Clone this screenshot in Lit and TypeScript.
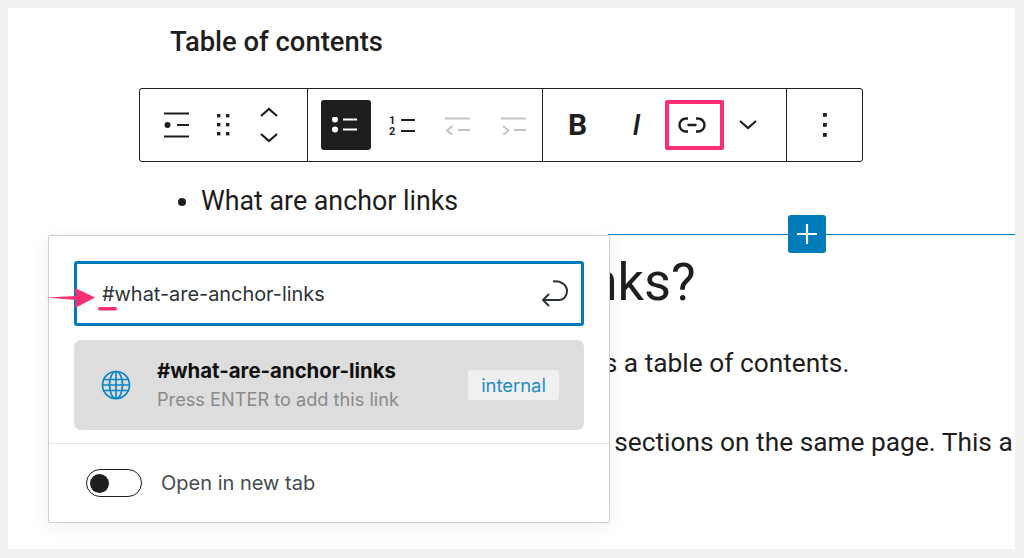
import { LitElement, html, css, svg } from "lit";
import { customElement } from "lit/decorators.js";

const ic = (w: number, h: number, body: unknown) =>
  html`<svg class="ic" width=${w} height=${h} viewBox="0 0 ${w} ${h}" fill="none" stroke="currentColor" stroke-width="2.2">${body}</svg>`;

@customElement("app-root")
export class AppRoot extends LitElement {
  static styles = css`
    :host { display: block; width: 1024px; height: 558px; background: #f1f1f1; font-family: Roboto, "Liberation Sans", sans-serif; color: #1e1e1e; overflow: hidden; }
    .page { position: relative; margin: 0 8px; top: 8px; height: 541px; width: 1007px; background: #fff; overflow: hidden; padding-left: 162px; box-sizing: border-box; }
    .toc { margin: 0; padding-top: 18px; font-size: 27.4px; line-height: 32px; font-weight: 500; }
    .toolbar { display: flex; width: 724px; height: 74px; box-sizing: border-box; margin: 30px 0 0 -31px; border: 1.5px solid #1e1e1e; border-radius: 3px; background: #fff; }
    .group { display: flex; align-items: center; box-sizing: border-box; border-right: 1.5px solid #1e1e1e; }
    .group:last-child { border-right: 0; }
    .g1 { width: 168px; padding-left: 24px; gap: 27px; }
    .g1 .ch { margin-left: 2px; }
    .g2 { width: 235px; padding-left: 13px; }
    .g3 { width: 244px; padding-left: 6px; }
    .btn { width: 50px; height: 50px; display: flex; align-items: center; justify-content: center; flex: none; box-sizing: border-box; }
    .g2 .btn { width: 54px; }
    .g2 .btn.active { width: 50px; margin-right: 4px; padding-right: 3px; background: #1e1e1e; color: #fff; border-radius: 3px; }
    .g2 .btn.off { color: #c4c4c4; margin-left: 2px; }
    .g3 .btn { width: 57px; }
    .bold { font-size: 30px; font-weight: 700; line-height: 1; margin-right: 2px; }
    .ital { font-size: 29px; font-style: italic; font-weight: 500; line-height: 1; }
    .g3 .btn.link { width: 59px; height: 50px; border: 4px solid #fb2f72; border-radius: 2px; padding-right: 5px; }
    .g3 .btn.more { width: 48px; }
    .g4 { flex: 1; justify-content: center; }
    ul { margin: 22px 0 0; padding: 0 0 0 31px; font-size: 26.8px; line-height: 34px; }
    h2 { margin: 35px 0 0; font-size: 52.2px; line-height: 60px; font-weight: 400; white-space: nowrap; }
    p { margin: 0; font-size: 26.3px; line-height: 34px; white-space: nowrap; }
    .p1 { margin-top: 33px; }
    .p2 { margin-top: 45px; }
    .line { position: absolute; left: 600px; right: 0; top: 226px; border-top: 1.5px solid #007cba; }
    .plus { position: absolute; left: 780px; top: 207px; width: 38px; height: 38px; background: #007cba; border-radius: 3px; display: flex; align-items: center; justify-content: center; color: #fff; }
    .pop { position: absolute; left: 40px; top: 227px; width: 562px; height: 288px; box-sizing: border-box; background: #fff; border: 1.5px solid #cfcfcf; border-radius: 2px; box-shadow: 0 3px 20px rgba(0,0,0,.07); padding: 25px 25px 0; font-family: Inter, Roboto, sans-serif; }
    .input { height: 65px; box-sizing: border-box; border: 3px solid #007cba; border-radius: 3px; display: flex; align-items: center; justify-content: space-between; padding: 0 12px 0 25px; font-size: 19.9px; color: #2c3338; }
    .sugg { height: 90px; margin-top: 14px; background: #ddd; border-radius: 7px; display: flex; align-items: center; padding: 0 25px 0 27px; color: #0f86c6; }
    .st { margin-left: 26px; flex: 1; }
    .t1 { font-size: 20.4px; font-weight: 700; line-height: 26px; color: #111; }
    .t2 { font-size: 18.2px; line-height: 26px; color: #8a8a8a; margin-top: 2px; }
    .badge { width: 91px; height: 30px; box-sizing: border-box; background: #f0f0f0; border-radius: 3px; font-size: 18.4px; line-height: 30px; text-align: center; color: #1e8cc4; }
    .div { margin: 13px -25px 0; border-top: 1.5px solid #e4e4e4; }
    .tog { display: flex; align-items: center; margin: 25px 0 0 12px; gap: 19px; font-size: 20px; color: #454b52; }
    .sw { width: 56px; height: 28px; box-sizing: border-box; border: 1.5px solid #1e1e1e; border-radius: 14px; display: flex; align-items: center; padding-left: 3px; }
    .kn { width: 19px; height: 19px; border-radius: 50%; background: #1e1e1e; }
    .arrow { position: absolute; left: 37px; top: 280px; }
    .ic { display: block; }
  `;

  render() {
    return html`<div class="page">
      <h3 class="toc">Table of contents</h3>
      <div class="toolbar">
        <div class="group g1">
          ${ic(26, 26, svg`<path d="M0 1.5h25M13 13h12M0 24.5h25"/><circle cx="3.5" cy="13" r="3" fill="currentColor" stroke="none"/>`)}
          ${ic(14, 22, svg`<g fill="currentColor" stroke="none"><rect x="0" y="0" width="3.4" height="3.4"/><rect x="9" y="0" width="3.4" height="3.4"/><rect x="0" y="9" width="3.4" height="3.4"/><rect x="9" y="9" width="3.4" height="3.4"/><rect x="0" y="18" width="3.4" height="3.4"/><rect x="9" y="18" width="3.4" height="3.4"/></g>`)}
          <div class="ch">${ic(18, 36, svg`<path d="M1 9l8-7 8 7M1 27l8 7 8-7"/>`)}</div>
        </div>
        <div class="group g2">
          <div class="btn active">${ic(25, 16, svg`<circle cx="3" cy="2.5" r="3" fill="currentColor" stroke="none"/><circle cx="3" cy="12.5" r="3" fill="currentColor" stroke="none"/><path d="M11 2.5h14M11 12.5h14"/>`)}</div>
          <div class="btn">${ic(26, 22, svg`<text x="0" y="9.5" font-size="11" font-weight="700" fill="currentColor" stroke="none">1</text><text x="0" y="21" font-size="11" font-weight="700" fill="currentColor" stroke="none">2</text><path d="M12 6h14M12 17h14"/>`)}</div>
          <div class="btn off">${ic(26, 20, svg`<path d="M0 3.5h25M13 15h12"/><path d="M7.5 11l-5.5 4.5 5.5 4.5" stroke-width="2"/>`)}</div>
          <div class="btn off">${ic(26, 20, svg`<path d="M0 3.5h25M13 15h12"/><path d="M2 11l5.5 4.5-5.5 4.5" stroke-width="2"/>`)}</div>
        </div>
        <div class="group g3">
          <div class="btn bold">B</div>
          <div class="btn ital">I</div>
          <div class="btn link">${ic(28, 16, svg`<g stroke-width="2.4"><path d="M10 1.5H8a6.5 6.5 0 0 0 0 13h2M18 1.5h2a6.5 6.5 0 0 1 0 13h-2M9.5 8h9"/></g>`)}</div>
          <div class="btn more">${ic(18, 10, svg`<path d="M1 1l8 7 8-7"/>`)}</div>
        </div>
        <div class="group g4">
          ${ic(4, 24, svg`<g fill="currentColor" stroke="none"><rect x="0" y="0" width="3.8" height="3.8"/><rect x="0" y="10" width="3.8" height="3.8"/><rect x="0" y="20" width="3.8" height="3.8"/></g>`)}
        </div>
      </div>
      <ul><li>What are anchor links</li></ul>
      <h2>What are anchor links?</h2>
      <p class="p1">Here is a quick overview of how that is a table of contents.</p>
      <p class="p2">Anchor links let users jump directly to sections on the same page. This a</p>

      <div class="line"></div>
      <div class="plus">${ic(20, 20, svg`<path d="M10 0v20M0 10h20"/>`)}</div>

      <div class="pop">
        <div class="input">
          <span>#what-are-anchor-links</span>
          ${ic(28, 29, svg`<path d="M12 2.5C20 1.5 26 6 26 12c0 6-4 9-8 9H2.5M8 15l-6 6 6 6" stroke-width="2"/>`)}
        </div>
        <div class="sugg">
          ${ic(30, 30, svg`<g stroke-width="1.7"><circle cx="15" cy="15" r="13.5"/><ellipse cx="15" cy="15" rx="6.5" ry="13.5"/><path d="M15 1.5v27M2 9.5h26M1.5 15h27M2 20.5h26"/></g>`)}
          <div class="st">
            <div class="t1">#what-are-anchor-links</div>
            <div class="t2">Press ENTER to add this link</div>
          </div>
          <div class="badge">internal</div>
        </div>
        <div class="div"></div>
        <div class="tog"><div class="sw"><div class="kn"></div></div><span>Open in new tab</span></div>
      </div>

      <svg class="arrow" width="74" height="34" viewBox="0 0 74 34" fill="#fb2f72">
        <path d="M1 9.5L31 8 30 0 50 9.5 30 20 31 12Z"/>
        <rect x="53" y="19" width="19" height="3.5" rx="1.7"/>
      </svg>
    </div>`;
  }
}
